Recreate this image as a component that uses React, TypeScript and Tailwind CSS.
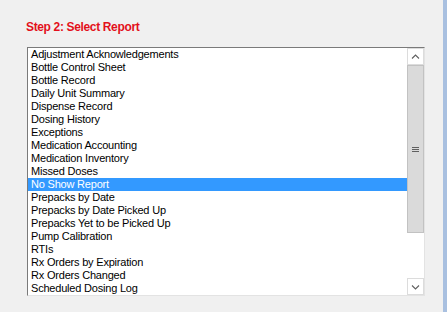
import React from 'react'

const reports = [
  'Adjustment Acknowledgements',
  'Bottle Control Sheet',
  'Bottle Record',
  'Daily Unit Summary',
  'Dispense Record',
  'Dosing History',
  'Exceptions',
  'Medication Accounting',
  'Medication Inventory',
  'Missed Doses',
  'No Show Report',
  'Prepacks by Date',
  'Prepacks by Date Picked Up',
  'Prepacks Yet to be Picked Up',
  'Pump Calibration',
  'RTIs',
  'Rx Orders by Expiration',
  'Rx Orders Changed',
  'Scheduled Dosing Log',
]

function Arrow({ down = false }: { down?: boolean }) {
  return (
    <svg width="9" height="6" viewBox="0 0 9 6" className="block">
      <path
        d={down ? 'M1 1.5 L4.5 5 L8 1.5' : 'M1 4.5 L4.5 1 L8 4.5'}
        fill="none"
        stroke="#606060"
        strokeWidth="1.1"
      />
    </svg>
  )
}

function ScrollBar() {
  return (
    <div className="flex w-[17px] shrink-0 flex-col bg-white">
      <div className="flex h-[17px] items-center justify-center border border-[#dcdcdc] bg-white">
        <Arrow />
      </div>
      <div className="flex h-[168px] items-center justify-center border border-[#c2c2c2] bg-[#dadada]">
        <div className="flex w-[7px] flex-col gap-[1px]">
          <div className="h-[1px] bg-[#606060]" />
          <div className="h-[1px] bg-[#606060]" />
          <div className="h-[1px] bg-[#606060]" />
        </div>
      </div>
      <div className="flex-1 bg-white" />
      <div className="flex h-[17px] items-center justify-center border border-[#dcdcdc] bg-white">
        <Arrow down />
      </div>
    </div>
  )
}

export default function App() {
  const selected = 'No Show Report'

  return (
    <div className="flex h-[312px] w-[447px] bg-[#f0f0f0]">
      <div className="flex-1 pl-[26px] pt-[20px]">
        <div
          className="h-[14px] text-[12px] font-bold leading-[14px] tracking-[-0.35px] text-[#e3101b]"
          style={{ fontFamily: '"Liberation Sans", Arial, sans-serif' }}
        >
          Step 2: Select Report
        </div>
        <div className="ml-[1px] mt-[13px] flex h-[249px] w-[398px] border border-t-[#7a7a7a] border-l-[#7a7a7a] border-r-[#e3e3e3] border-b-[#e3e3e3] bg-white">
          <div
            className="flex-1 overflow-hidden text-[11px] leading-[13px] tracking-[-0.2px] text-black"
            style={{ fontFamily: '"Liberation Sans", Arial, sans-serif' }}
          >
            {reports.map((r) => (
              <div
                key={r}
                className={
                  r === selected
                    ? 'h-[13px] whitespace-nowrap bg-[#3399ff] pl-[3px] text-white'
                    : 'h-[13px] whitespace-nowrap pl-[3px]'
                }
              >
                {r}
              </div>
            ))}
          </div>
          <ScrollBar />
        </div>
      </div>
      <div className="w-[4px] bg-[#a9c0e0]" />
    </div>
  )
}
